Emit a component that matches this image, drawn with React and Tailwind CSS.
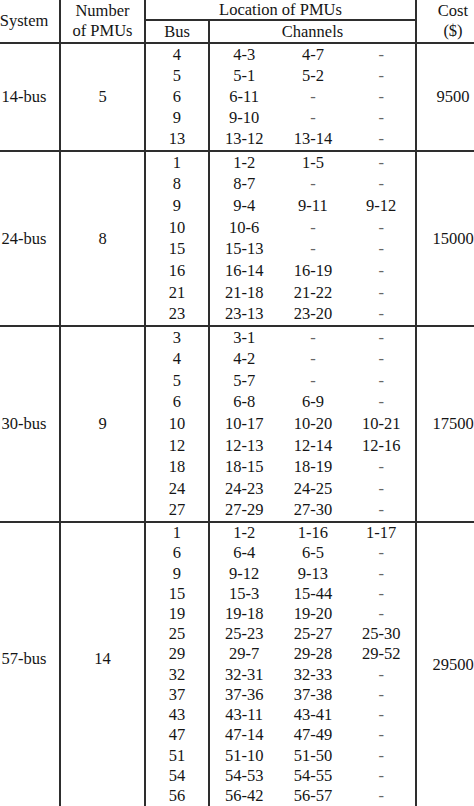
import React from 'react';

const sections = [
  {
    system: '14-bus',
    count: '5',
    cost: '9500',
    height: 'h-[108px]',
    rows: [
      ['4', '4-3', '4-7', '-'],
      ['5', '5-1', '5-2', '-'],
      ['6', '6-11', '-', '-'],
      ['9', '9-10', '-', '-'],
      ['13', '13-12', '13-14', '-'],
    ],
  },
  {
    system: '24-bus',
    count: '8',
    cost: '15000',
    height: 'h-[175px]',
    rows: [
      ['1', '1-2', '1-5', '-'],
      ['8', '8-7', '-', '-'],
      ['9', '9-4', '9-11', '9-12'],
      ['10', '10-6', '-', '-'],
      ['15', '15-13', '-', '-'],
      ['16', '16-14', '16-19', '-'],
      ['21', '21-18', '21-22', '-'],
      ['23', '23-13', '23-20', '-'],
    ],
  },
  {
    system: '30-bus',
    count: '9',
    cost: '17500',
    height: 'h-[196px]',
    rows: [
      ['3', '3-1', '-', '-'],
      ['4', '4-2', '-', '-'],
      ['5', '5-7', '-', '-'],
      ['6', '6-8', '6-9', '-'],
      ['10', '10-17', '10-20', '10-21'],
      ['12', '12-13', '12-14', '12-16'],
      ['18', '18-15', '18-19', '-'],
      ['24', '24-23', '24-25', '-'],
      ['27', '27-29', '27-30', '-'],
    ],
  },
  {
    system: '57-bus',
    count: '14',
    cost: '29500',
    height: 'h-[283px]',
    last: true,
    rows: [
      ['1', '1-2', '1-16', '1-17'],
      ['6', '6-4', '6-5', '-'],
      ['9', '9-12', '9-13', '-'],
      ['15', '15-3', '15-44', '-'],
      ['19', '19-18', '19-20', '-'],
      ['25', '25-23', '25-27', '25-30'],
      ['29', '29-7', '29-28', '29-52'],
      ['32', '32-31', '32-33', '-'],
      ['37', '37-36', '37-38', '-'],
      ['43', '43-11', '43-41', '-'],
      ['47', '47-14', '47-49', '-'],
      ['51', '51-10', '51-50', '-'],
      ['54', '54-53', '54-55', '-'],
      ['56', '56-42', '56-57', '-'],
    ],
  },
];

const Section = ({ section }) => {
  const { system, count, cost, height, rows, last } = section;
  return (
    <div className={`flex ${height} ${last ? '' : 'border-b-2 border-[#2e2e2e]'}`}>
      <div className={`w-[72px] shrink-0 flex items-center justify-center border-r-2 border-[#2e2e2e] ${last ? 'pb-[12px]' : ''}`}>
        {system}
      </div>
      <div className={`w-[85px] shrink-0 flex items-center justify-center border-r-2 border-[#2e2e2e] ${last ? 'pb-[12px]' : ''}`}>
        {count}
      </div>
      <div className="w-[271px] shrink-0 flex flex-col border-r-2 border-[#2e2e2e]">
        {rows.map((row) => (
          <div key={row[0]} className="flex-1 flex items-center">
            <div className="w-[64px] h-full flex items-center justify-center border-r-2 border-[#2e2e2e]">
              {row[0]}
            </div>
            <div className="w-[69px] text-center">{row[1]}</div>
            <div className={`w-[69px] text-center ${row[2] === '-' ? 'text-[#666]' : ''}`}>{row[2]}</div>
            <div className={`w-[68px] text-center ${row[3] === '-' ? 'text-[#666]' : ''}`}>{row[3]}</div>
          </div>
        ))}
      </div>
      <div className="w-[72px] shrink-0 flex items-center justify-center">{cost}</div>
    </div>
  );
};

export default function App() {
  return (
    <div className="w-[474px] h-[806px] overflow-hidden bg-white text-[#151515] text-[16.5px] leading-[20px] font-['Liberation_Serif','Times_New_Roman',serif]">
      <div className="ml-[-11px] w-[500px]">
        <div className="flex h-[44px] border-b-2 border-[#2e2e2e]">
          <div className="w-[72px] shrink-0 flex items-center justify-center border-r-2 border-[#2e2e2e]">
            System
          </div>
          <div className="w-[85px] shrink-0 flex flex-col items-center justify-center border-r-2 border-[#2e2e2e]">
            <span>Number</span>
            <span>of PMUs</span>
          </div>
          <div className="w-[271px] shrink-0 flex flex-col border-r-2 border-[#2e2e2e]">
            <div className="h-[21px] flex items-center justify-center border-b-2 border-[#2e2e2e]">
              Location of PMUs
            </div>
            <div className="flex-1 flex">
              <div className="w-[64px] flex items-center justify-center border-r-2 border-[#2e2e2e]">Bus</div>
              <div className="flex-1 flex items-center justify-center">Channels</div>
            </div>
          </div>
          <div className="w-[72px] shrink-0 flex flex-col items-center justify-center">
            <span>Cost</span>
            <span>($)</span>
          </div>
        </div>
        {sections.map((s) => (
          <Section key={s.system} section={s} />
        ))}
      </div>
    </div>
  );
}
